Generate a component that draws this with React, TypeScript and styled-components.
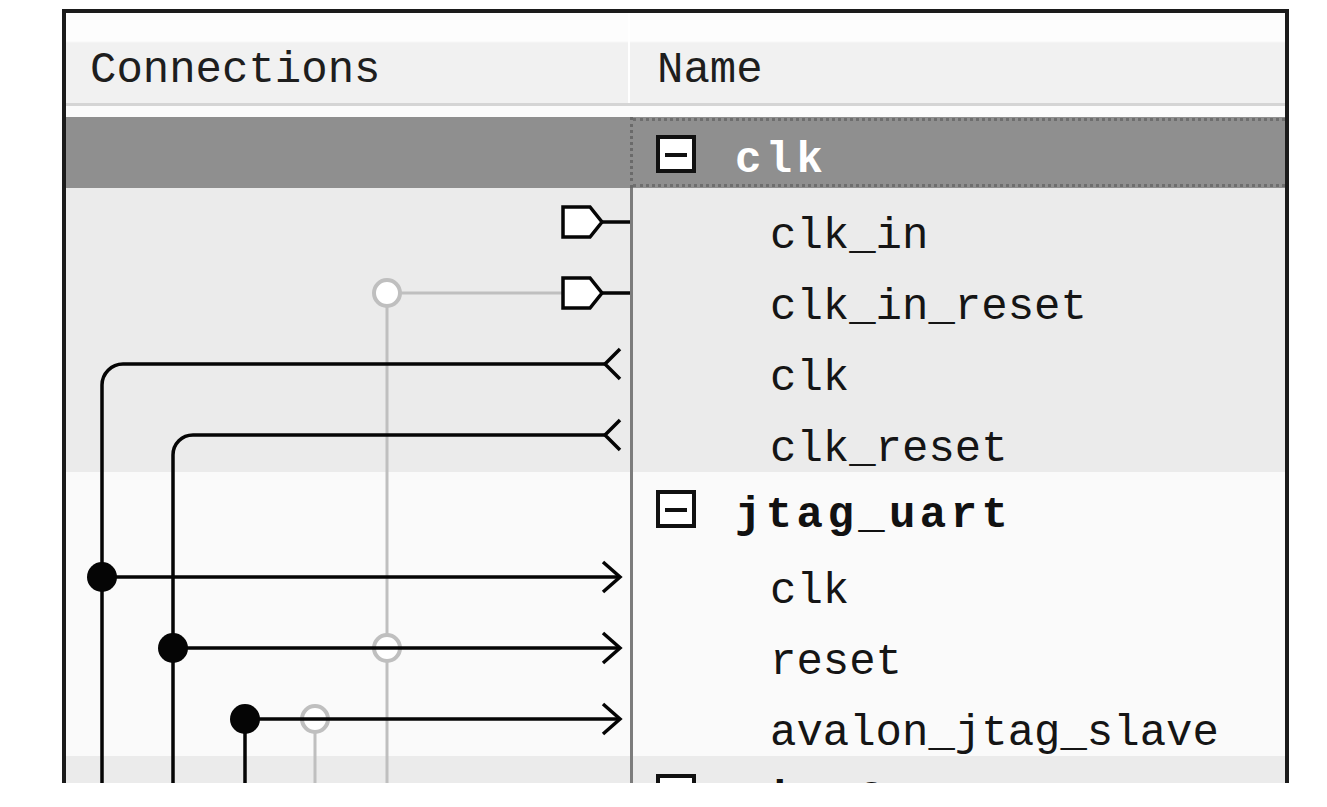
import React from 'react';
import styled, { createGlobalStyle, css } from 'styled-components';

const Global = createGlobalStyle`
  html, body { margin: 0; padding: 0; background: #ffffff; }
  body {
    width: 1327px;
    height: 807px;
    overflow: hidden;
    font-family: "Liberation Mono", "DejaVu Sans Mono", monospace;
  }
`;

const Page = styled.div`
  box-sizing: border-box;
  height: 807px;
  padding: 9px 0 0 62px;
`;

const Frame = styled.div`
  box-sizing: border-box;
  width: 1227px;
  height: 774px;
  border: 4px solid #1b1b1b;
  border-bottom: none;
  background: #fbfbfb;
  overflow: hidden;
  display: flex;
  flex-direction: column;
`;

const Header = styled.div`
  flex: none;
  box-sizing: border-box;
  display: grid;
  grid-template-columns: 564px 1fr;
  height: 93px;
  border-bottom: 3px solid #d5d5d5;
  margin-bottom: 11px;
  background: linear-gradient(#fdfdfd 0, #fdfdfd 28px, #f1f1f1 30px, #f1f1f1 100%);
`;

const HeaderCell = styled.div<{ $first?: boolean }>`
  box-sizing: border-box;
  padding-top: 35px;
  padding-left: ${(p) => (p.$first ? '24px' : '25px')};
  font-size: 44px;
  line-height: 44px;
  color: #1e1e1e;
  ${(p) =>
    p.$first
      ? css`border-right: 2px solid #d9d9d9;`
      : css`border-left: 2px solid #ffffff; margin-left: -2px; padding-left: 27px;`}
`;

const Body = styled.div`
  position: relative;
  flex: 1;
`;

type Tone = 'selected' | 'gray' | 'white';

const toneBg: Record<Tone, string> = {
  selected: '#8f8f8f',
  gray: '#ebebeb',
  white: '#fafafa',
};

const Row = styled.div<{ $tone: Tone }>`
  display: grid;
  grid-template-columns: 564px 1fr;
  height: 71px;
  background: ${(p) => toneBg[p.$tone]};
`;

const ConnCell = styled.div``;

const NameCell = styled.div<{ $selected?: boolean; $group?: boolean }>`
  position: relative;
  box-sizing: border-box;
  border-left: 3px solid #7c7c7c;
  display: flex;
  align-items: flex-start;
  padding-top: ${(p) => (p.$group ? '18px' : '26px')};
  padding-left: ${(p) => (p.$group ? '23px' : '137px')};
  ${(p) =>
    p.$selected &&
    css`
      border-left: 3px dotted #6a6a6a;
      &::after {
        content: '';
        position: absolute;
        left: 0;
        right: 0;
        top: 1px;
        bottom: 1px;
        border-top: 3px dotted #6e6e6e;
        border-bottom: 3px dotted #6e6e6e;
        pointer-events: none;
      }
    `}
`;

const ExpandBox = styled.div`
  position: relative;
  flex: none;
  box-sizing: border-box;
  width: 40px;
  height: 38px;
  border: 4px solid #111111;
  background: #ffffff;
  &::before {
    content: '';
    position: absolute;
    left: 5px;
    top: 14px;
    width: 22px;
    height: 4px;
    background: #111111;
  }
`;

const GroupLabel = styled.span<{ $selected?: boolean }>`
  margin-left: 39px;
  margin-top: 3px;
  font-size: 44px;
  line-height: 44px;
  font-weight: bold;
  letter-spacing: 4.4px;
  white-space: nowrap;
  color: ${(p) => (p.$selected ? '#ffffff' : '#111111')};
`;

const ItemLabel = styled.span`
  font-size: 44px;
  line-height: 44px;
  white-space: nowrap;
  color: #151515;
`;

const Wires = styled.svg`
  position: absolute;
  left: 0;
  top: 0;
  width: 564px;
  height: 666px;
  pointer-events: none;
`;

type RowData = { kind: 'group' | 'item'; label: string; tone: Tone };

const rows: RowData[] = [
  { kind: 'group', label: 'clk', tone: 'selected' },
  { kind: 'item', label: 'clk_in', tone: 'gray' },
  { kind: 'item', label: 'clk_in_reset', tone: 'gray' },
  { kind: 'item', label: 'clk', tone: 'gray' },
  { kind: 'item', label: 'clk_reset', tone: 'gray' },
  { kind: 'group', label: 'jtag_uart', tone: 'white' },
  { kind: 'item', label: 'clk', tone: 'white' },
  { kind: 'item', label: 'reset', tone: 'white' },
  { kind: 'item', label: 'avalon_jtag_slave', tone: 'white' },
  { kind: 'group', label: 'nios2_qsys', tone: 'gray' },
];

const BLACK = '#050505';
const GRAY = '#bfbfbf';

const Connections: React.FC = () => {
  const y = (i: number) => i * 71 + 34;
  const exportShape = (cy: number) =>
    `M497,${cy - 15} H524 L536,${cy} L524,${cy + 15} H497 Z`;
  const outArrow = (cy: number) => `M537,${cy - 15} L554,${cy} L537,${cy + 15}`;
  const inArrow = (cy: number) => `M554,${cy - 15} L539,${cy} L554,${cy + 15}`;
  return (
    <Wires viewBox="0 0 564 666">
      {/* grey verticals */}
      <line x1={321} y1={y(2)} x2={321} y2={666} stroke={GRAY} strokeWidth={3} />
      <line x1={249} y1={y(8)} x2={249} y2={666} stroke={GRAY} strokeWidth={3} />
      <line x1={335} y1={y(2)} x2={497} y2={y(2)} stroke={GRAY} strokeWidth={3} />

      {/* exported clock input */}
      <line x1={536} y1={y(1)} x2={564} y2={y(1)} stroke={BLACK} strokeWidth={3.5} />
      <path d={exportShape(y(1))} fill="#ffffff" stroke={BLACK} strokeWidth={3.5} />
      <line x1={536} y1={y(2)} x2={564} y2={y(2)} stroke={BLACK} strokeWidth={3.5} />
      <path d={exportShape(y(2))} fill="#ffffff" stroke={BLACK} strokeWidth={3.5} />

      {/* clk / clk_reset sources */}
      <path
        d={`M539,${y(3)} H57 A21,21 0 0 0 36,${y(3) + 21} V666`}
        fill="none"
        stroke={BLACK}
        strokeWidth={3.5}
      />
      <path d={inArrow(y(3))} fill="none" stroke={BLACK} strokeWidth={3.5} />
      <path
        d={`M539,${y(4)} H127 A20,20 0 0 0 107,${y(4) + 20} V666`}
        fill="none"
        stroke={BLACK}
        strokeWidth={3.5}
      />
      <path d={inArrow(y(4))} fill="none" stroke={BLACK} strokeWidth={3.5} />

      {/* grey hollow taps */}
      <circle cx={321} cy={y(2)} r={13} fill="#ffffff" stroke={GRAY} strokeWidth={4} />
      <circle cx={321} cy={y(7)} r={13} fill="#ffffff" stroke={GRAY} strokeWidth={4} />
      <circle cx={249} cy={y(8)} r={13} fill="#ffffff" stroke={GRAY} strokeWidth={4} />

      {/* jtag_uart sinks */}
      <line x1={179} y1={y(8)} x2={179} y2={666} stroke={BLACK} strokeWidth={3.5} />
      <line x1={36} y1={y(6)} x2={554} y2={y(6)} stroke={BLACK} strokeWidth={3.5} />
      <path d={outArrow(y(6))} fill="none" stroke={BLACK} strokeWidth={3.5} />
      <line x1={107} y1={y(7)} x2={554} y2={y(7)} stroke={BLACK} strokeWidth={3.5} />
      <path d={outArrow(y(7))} fill="none" stroke={BLACK} strokeWidth={3.5} />
      <line x1={179} y1={y(8)} x2={554} y2={y(8)} stroke={BLACK} strokeWidth={3.5} />
      <path d={outArrow(y(8))} fill="none" stroke={BLACK} strokeWidth={3.5} />

      <circle cx={36} cy={y(6)} r={15} fill={BLACK} />
      <circle cx={107} cy={y(7)} r={15} fill={BLACK} />
      <circle cx={179} cy={y(8)} r={15} fill={BLACK} />
    </Wires>
  );
};

export default function App() {
  return (
    <>
      <Global />
      <Page>
        <Frame>
          <Header>
            <HeaderCell $first>Connections</HeaderCell>
            <HeaderCell>Name</HeaderCell>
          </Header>
          <Body>
            {rows.map((r, i) => (
              <Row key={i} $tone={r.tone}>
                <ConnCell />
                {r.kind === 'group' ? (
                  <NameCell $group $selected={r.tone === 'selected'}>
                    <ExpandBox />
                    <GroupLabel $selected={r.tone === 'selected'}>{r.label}</GroupLabel>
                  </NameCell>
                ) : (
                  <NameCell>
                    <ItemLabel>{r.label}</ItemLabel>
                  </NameCell>
                )}
              </Row>
            ))}
            <Connections />
          </Body>
        </Frame>
      </Page>
    </>
  );
}
